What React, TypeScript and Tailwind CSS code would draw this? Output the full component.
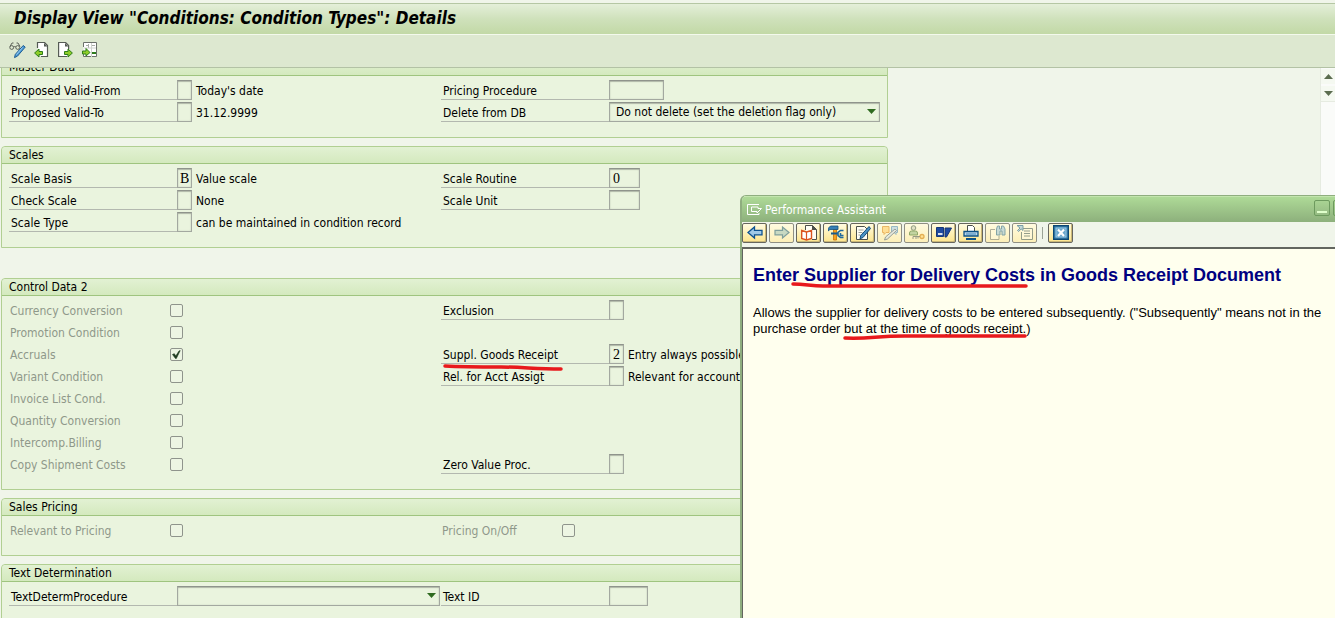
import type { ReactNode } from "react";

const inputBox =
  "h-5 shrink-0 border border-[#a3a8a0] border-t-[#8f948c] bg-[#eaf4de] pt-px font-['Liberation_Serif',serif] text-sm leading-4 text-black shadow-[inset_0_1px_1px_rgba(0,0,0,0.22),inset_0_0_2px_rgba(0,0,0,0.12)] outline-none";

function Panel({ title, children }: { title: string; children: ReactNode }) {
  return (
    <section className="rounded-t border border-[#b1cf92] bg-[#eaf4de]">
      <h2 className="h-[17px] rounded-t border-b border-[#9fc47f] bg-linear-to-b from-[#e2f1d3] to-[#d4e9be] pl-[7px] text-xs leading-4">
        {title}
      </h2>
      <div className="pt-[3px] pb-3.5 pl-[7px]">{children}</div>
    </section>
  );
}

function Row({ left, right }: { left?: ReactNode; right?: ReactNode }) {
  return (
    <div className="grid h-[22px] grid-cols-[432px_1fr]">
      <div className="flex items-center">{left}</div>
      <div className="flex items-center">{right}</div>
    </div>
  );
}

function FieldLabel({ id, children, marked }: { id: string; children: ReactNode; marked?: boolean }) {
  return (
    <label htmlFor={id} className="relative h-5 w-[168px] shrink-0 border-b border-[#b3b8af] pl-0.5 leading-[22px]">
      {children}
      {marked && (
        <svg className="absolute top-[18px] left-0 z-10" width="124" height="10" fill="none">
          <path d="M4 4C22 5 38 5 60 5s34 2 60 2" stroke="#e8191c" strokeWidth="3.5" strokeLinecap="round" />
        </svg>
      )}
    </label>
  );
}

type FieldProps = { id: string; label: string; value?: string; note?: string; size?: string; marked?: boolean };

function Field({ id, label, value = "", note, size = "w-[15px] px-[3px]", marked }: FieldProps) {
  return (
    <>
      <FieldLabel id={id} marked={marked}>{label}</FieldLabel>
      <input id={id} defaultValue={value} readOnly className={`${inputBox} ${size}`} />
      {note && <span className="pt-0.5 pl-1 whitespace-nowrap">{note}</span>}
    </>
  );
}

function SelectField({ id, label, value, size }: { id: string; label: string; value: string; size: string }) {
  return (
    <>
      <FieldLabel id={id}>{label}</FieldLabel>
      <div className={`relative ${size}`}>
        <select
          id={id}
          className="block h-5 w-full appearance-none border border-[#a3a8a0] border-t-[#8f948c] bg-[#eaf4de] pl-1.5 text-xs leading-4 text-black shadow-[inset_0_1px_1px_rgba(0,0,0,0.22),inset_0_0_2px_rgba(0,0,0,0.12)] outline-none"
        >
          <option>{value}</option>
        </select>
        <svg className="pointer-events-none absolute top-[7px] right-1" width="9" height="5" viewBox="0 0 9 5">
          <path d="M0 0h9L4.500 5z" fill="#2f6b20" />
        </svg>
      </div>
    </>
  );
}

function Check({ id, label, checked, narrow }: { id: string; label: string; checked?: boolean; narrow?: boolean }) {
  return (
    <>
      <label htmlFor={id} className={`pt-0.5 pl-px text-[#8f988a] ${narrow ? "w-[121px]" : "w-[161px]"}`}>
        {label}
      </label>
      <span className="relative h-[13px] w-[13px]">
        <input
          id={id}
          type="checkbox"
          defaultChecked={checked}
          disabled
          className="block h-[13px] w-[13px] appearance-none rounded-[2px] border border-[#8f948c] bg-[#edf5e3]"
        />
        {checked && (
          <svg className="pointer-events-none absolute top-0 left-0" width="13" height="13" viewBox="0 0 13 13">
            <path d="M2.5 6.5l1.8-.8L5.8 8 9 3l1.2-.4L6.3 10.500H5.500z" fill="#1c3a1e" stroke="#1c3a1e" strokeWidth=".6" />
          </svg>
        )}
      </span>
    </>
  );
}

function DisplayChangeIcon() {
  return (
    <svg width="17" height="17" viewBox="0 0 17 17" fill="none">
      <g stroke="#5d6259" strokeWidth="1">
        <circle cx="2.700" cy="5.500" r="1.900" />
        <circle cx="8.700" cy="5.500" r="1.900" />
        <path d="M4.500 5q1.200-1 2.400 0M1 4.500L3 1h1.500M7.500 1H9l2 3.500" />
      </g>
      <path d="M14.200 3.500l2 1.600-7.700 9-3 1.500.8-3.200z" fill="#4b9bd6" stroke="#1d5c93" strokeWidth="1" />
      <path d="M13.500 5.500l-6 7" stroke="#9ccbef" />
    </svg>
  );
}

function PrevEntryIcon() {
  return (
    <svg width="15" height="16" viewBox="0 0 15 16">
      <path d="M3.500 6V.500h7l3 3V14.500H7" fill="#fff" stroke="#555b55" strokeWidth="1.200" />
      <path d="M10 1v3.500h3.500L10 1z" fill="#555b55" />
      <path d="M.6 11L5 7v2.500h3.500v3H5V15z" fill="#8fce28" stroke="#2d7d1c" />
    </svg>
  );
}

function NextEntryIcon() {
  return (
    <svg width="15" height="16" viewBox="0 0 15 16">
      <path d="M9 14.500H.600V.500h7l3 3V7" fill="#fff" stroke="#555b55" strokeWidth="1.200" />
      <path d="M7 1v3.500h3.500L7 1z" fill="#555b55" />
      <path d="M14.400 11L10 7v2.500H6.500v3H10V15z" fill="#8fce28" stroke="#2d7d1c" />
    </svg>
  );
}

function PositionIcon() {
  return (
    <svg width="16" height="16" viewBox="0 0 16 16">
      <path d="M1.500 5V.500h13v14h-13V12" fill="#fff" stroke="#6c716b" />
      <path d="M4 3h3v1H4zM6 2h1v4H6zM10 3h3v1h-3z" fill="#a7aba5" />
      <path d="M2 6h12M9.500 1v14" stroke="#d0d3ce" />
      <path d="M.500 9H4V6.500L8 10.500 4 14v-2H.500z" fill="#8fce28" stroke="#2d7d1c" />
      <path d="M10 10h4v2h-4z" fill="#2d7d1c" />
    </svg>
  );
}

const BackIcon = (
  <path d="M1 7.500L7.500 2v3.300H15v4.500H7.500V13z" fill="#9fc9e8" stroke="#0d5291" strokeWidth="1.300" />
);
const ForwardIcon = (
  <path d="M15 7.500L8.500 2v3.300H1v4.500h7.500V13z" fill="#c8d9c2" stroke="#7f9f9c" strokeWidth="1.200" />
);
const BookIcon = (
  <>
    <path d="M4.500 5V.500h7l4 4v10H11" fill="#fffef4" stroke="#4b4f4b" />
    <path d="M11 0v5h5z" fill="#4b4f4b" />
    <path d="M.700 5.500L5.500 7l5-1.500v8L5.500 15 .700 13.500z" fill="#fff" stroke="#db5420" strokeWidth="1.400" />
    <path d="M5.500 7v8" stroke="#db5420" strokeWidth="1.200" />
  </>
);
const ToolsIcon = (
  <>
    <path d="M5.500 4h3v11h-3z" fill="#f8a21a" stroke="#c86d0a" strokeWidth=".8" />
    <path d="M0 3.500L2.500 1H10v3.500H2L0 6z" fill="#367fb5" stroke="#11507f" strokeWidth=".8" />
    <path d="M3 8.500h7" stroke="#1a5a8d" strokeWidth="2" />
    <path d="M15.500 5.500h-3L10 7.500v3l2.500 2h3M12.500 8v2.500h3" fill="none" stroke="#1f689d" strokeWidth="1.600" />
  </>
);
const NoteIcon = (
  <>
    <path d="M1.500 1.500h8l3 3v10h-11z" fill="#fffef4" stroke="#4b4f4b" />
    <path d="M3.500 5h5M3.500 7.500h4M3.500 10h2" stroke="#9a9d99" />
    <path d="M14 1.500l1.500 2-7.500 9-3 1.300.7-3.200z" fill="#4b92c4" stroke="#154d7b" />
  </>
);
const TranslateIcon = (
  <g opacity=".7">
    <path d="M.500 1.500H7v6H4l-2 2v-2H.500z" fill="#ffd47a" stroke="#e29a35" />
    <path d="M9.500 1.500h6v6H14v2l-2-2H9.500z" fill="#b9d5e5" stroke="#6c9dba" />
    <path d="M13 4l1.500 1.500-9 8.500-3 1 1-3z" fill="#dbe5e5" stroke="#6d7a80" />
  </g>
);
const UserKeyIcon = (
  <g opacity=".7">
    <circle cx="4.500" cy="3" r="2.300" fill="#d5d8bd" stroke="#61735c" />
    <path d="M.500 10V8q0-2 2-2h4q2 0 2 2v2z" fill="#a8c58e" stroke="#61883f" />
    <circle cx="13" cy="11.500" r="2" fill="#ffdc82" stroke="#d99121" strokeWidth="1.300" />
    <path d="M11 11.500H4V14m3-2v2m2-2v1.500" fill="none" stroke="#6c7467" />
  </g>
);
const SplitIcon = (
  <>
    <path d="M.500 2.500h7v9h-7zM9 3h6.500L10.500 12H9z" fill="#1f4aa0" stroke="#163777" />
    <path d="M2 8h4.500v2H2z" fill="#d9e0ec" />
  </>
);
const PrintIcon = (
  <>
    <path d="M4.500 6V.500h5l2 2V6" fill="#fff" stroke="#4b4f4b" />
    <path d="M1 6.500h14v4.500H1z" fill="#b6d5ea" stroke="#0c5186" strokeWidth="1.300" />
    <path d="M3 9h10" stroke="#4287ba" />
    <path d="M3 14h10" stroke="#0c5186" strokeWidth="2" />
  </>
);
const FindIcon = (
  <g opacity=".65">
    <path d="M5 4.500H.500v10H9V11" fill="#fff9dc" stroke="#85877b" />
    <path d="M6.500 10V4l1-3h2v3h2V1h2l1.500 3v6h-3V6h-2v4z" fill="#a9c9d6" stroke="#427891" />
  </g>
);
const ListIcon = (
  <g opacity=".7">
    <path d="M4.500 3.500h11v11h-11V7" fill="#fff9dc" stroke="#66786f" />
    <path d="M7 6h6M7 8.500h6M7 11h6" stroke="#66786f" />
    <path d="M0 .500h6v5L4.200 4 1.500 6.500.500 5.500 3 3z" fill="#a9c9d6" stroke="#427891" />
  </g>
);
const CloseIcon = (
  <>
    <path d="M.700.700h14.600v13.600H.700z" fill="#4c92bf" stroke="#0c4773" strokeWidth="1.400" />
    <path d="M3 3h10v9H3z" fill="#6aa7cd" stroke="#a9cfe6" strokeWidth=".7" />
    <path d="M5 4.500l6 6.500M11 4.500L5 11" stroke="#fff" strokeWidth="2.200" />
  </>
);

const helpActions: { name: string; icon: ReactNode; off?: boolean }[] = [
  { name: "Back", icon: BackIcon },
  { name: "Forward", icon: ForwardIcon, off: true },
  { name: "Application Help", icon: BookIcon },
  { name: "Technical Information", icon: ToolsIcon },
  { name: "Edit Note", icon: NoteIcon },
  { name: "Translate", icon: TranslateIcon, off: true },
  { name: "Authorization", icon: UserKeyIcon, off: true },
  { name: "Display Position", icon: SplitIcon },
  { name: "Print", icon: PrintIcon },
  { name: "Find", icon: FindIcon, off: true },
  { name: "Customizing", icon: ListIcon, off: true },
];

function HelpButton({ name, icon, off }: { name: string; icon: ReactNode; off?: boolean }) {
  return (
    <button
      type="button"
      aria-label={name}
      disabled={off}
      className={`flex h-5 w-[25px] items-center justify-center rounded-[2px] border bg-linear-to-b ${
        off
          ? "border-[#8f8f84] from-[#fffbe0] to-[#fcefb8]"
          : "border-[#66665e] from-[#fffbe0] to-[#fde58c] shadow-[inset_-1px_-1px_0_#c9b878]"
      }`}
    >
      <svg width="16" height="16" viewBox="0 0 16 16" fill="none">
        {icon}
      </svg>
    </button>
  );
}

function PerformanceAssistant() {
  return (
    <aside className="absolute top-[195px] right-0 bottom-0 z-20 flex w-[595px] flex-col overflow-hidden rounded-tl-md border-t border-l-2 border-[#8fae7f] bg-[#f0f5ea]">
      <header className="flex h-[26px] shrink-0 items-center border-t border-[#c3e5ae] bg-linear-to-b from-[#aeda97] to-[#8db07c] pl-[5px] text-white">
        <svg width="16" height="13" viewBox="0 0 16 13" fill="none" stroke="#fff">
          <path d="M12 1.500H.500v10H12V10M4.500 4v4.500h5.500v1.500l4.500-4.500H11V4z" />
        </svg>
        <h2 className="flex-1 pl-[2px] text-xs">Performance Assistant</h2>
        <div className="-mr-[14px] flex gap-[3px] pb-1">
          <button
            type="button"
            aria-label="Minimize"
            className="flex h-4 w-4 items-end justify-center rounded-[2px] border border-[#6d9a5e] pb-[2px]"
          >
            <span className="h-0.5 w-2.5 bg-[#e0ffcc]" />
          </button>
          <button type="button" aria-label="Maximize" className="h-4 w-4 rounded-[2px] border border-[#6d9a5e]" />
        </div>
      </header>
      <div className="flex h-[25px] shrink-0 items-start gap-0.5 pt-px">
        {helpActions.map((a) => (
          <HelpButton key={a.name} {...a} />
        ))}
        <span className="mx-[3px] mt-1 h-3 w-px bg-[#9ba396]" />
        <HelpButton name="Close" icon={CloseIcon} />
      </div>
      <article className="relative flex-1 border-t-2 border-l border-[#62655f] bg-[#ffffee] px-[10px] pt-3.5 font-['Liberation_Sans',sans-serif] text-black">
        <h3 className="text-lg leading-6 font-bold whitespace-nowrap text-[#000080]">
          Enter Supplier for Delivery Costs in Goods Receipt Document
        </h3>
        <p className="pt-[18px] text-[13px] leading-4 whitespace-nowrap">
          Allows the supplier for delivery costs to be entered subsequently. ("Subsequently" means not in the
          <br />
          purchase order but at the time of goods receipt.)
        </p>
        <svg className="pointer-events-none absolute top-8 left-12" width="242" height="10" fill="none">
          <path d="M2 3c12 0 18 2 30 2h203" stroke="#e8191c" strokeWidth="3.500" strokeLinecap="round" />
        </svg>
        <svg className="pointer-events-none absolute top-[82px] left-[98px]" width="192" height="12" fill="none">
          <path d="M4 7c26 1 30-2 60-2h120" stroke="#e8191c" strokeWidth="3.500" strokeLinecap="round" />
        </svg>
      </article>
    </aside>
  );
}

const toolbar = [
  { name: "Display or Change", icon: <DisplayChangeIcon /> },
  { name: "Previous Entry", icon: <PrevEntryIcon /> },
  { name: "Next Entry", icon: <NextEntryIcon /> },
  { name: "Other Entry", icon: <PositionIcon /> },
];

export default function App() {
  return (
    <div className="relative flex h-screen flex-col overflow-hidden bg-[#f0f5ea] font-['DejaVu_Sans_Condensed','DejaVu_Sans',sans-serif] text-xs text-black">
      <header className="mt-[3px] h-8 shrink-0 border-y border-t-[#b5c7a4] border-b-[#f3f9ec] bg-linear-to-b from-[#e4efd9] via-[#cfe1bb] to-[#c2d9a6]">
        <h1 className="pl-3.5 text-[17px] leading-7 font-bold italic">
          Display View "Conditions: Condition Types": Details
        </h1>
      </header>
      <nav className="flex h-[33px] shrink-0 items-center gap-[7px] border-b border-[#b3c2a5] bg-[#dde8d0] pr-2 pb-0.5 pl-[9px]">
        {toolbar.map((t) => (
          <button key={t.name} type="button" aria-label={t.name} className="flex w-[17px] justify-center">
            {t.icon}
          </button>
        ))}
      </nav>
      <div className="flex min-h-0 flex-1">
        <main className="flex-1 overflow-hidden pl-px">
          <div className="-mt-2.5 flex max-w-[887px] flex-col gap-2">
            <Panel title="Master Data">
              <Row
                left={<Field id="valid-from" label="Proposed Valid-From" note="Today's date" />}
                right={<Field id="pricing-procedure" label="Pricing Procedure" size="w-[55px] px-[3px]" />}
              />
              <Row
                left={<Field id="valid-to" label="Proposed Valid-To" note="31.12.9999" />}
                right={
                  <SelectField
                    id="delete-db"
                    label="Delete from DB"
                    value="Do not delete (set the deletion flag only)"
                    size="w-[271px]"
                  />
                }
              />
            </Panel>
            <Panel title="Scales">
              <Row
                left={<Field id="scale-basis" label="Scale Basis" value="B" note="Value scale" size="w-[15px] px-[2px]" />}
                right={<Field id="scale-routine" label="Scale Routine" value="0" size="w-[31px] px-[3px]" />}
              />
              <Row
                left={<Field id="check-scale" label="Check Scale" note="None" />}
                right={<Field id="scale-unit" label="Scale Unit" size="w-[31px] px-[3px]" />}
              />
              <Row left={<Field id="scale-type" label="Scale Type" note="can be maintained in condition record" />} />
            </Panel>
            <div className="mt-[22px]">
              <Panel title="Control Data 2">
                <Row
                  left={<Check id="currency" label="Currency Conversion" />}
                  right={<Field id="exclusion" label="Exclusion" />}
                />
                <Row left={<Check id="promotion" label="Promotion Condition" />} />
                <Row
                  left={<Check id="accruals" label="Accruals" checked />}
                  right={
                    <Field id="goods-receipt" label="Suppl. Goods Receipt" value="2" note="Entry always possible" marked />
                  }
                />
                <Row
                  left={<Check id="variant" label="Variant Condition" />}
                  right={<Field id="acct-assigt" label="Rel. for Acct Assigt" note="Relevant for account assignment" />}
                />
                <Row left={<Check id="invoice" label="Invoice List Cond." />} />
                <Row left={<Check id="quantity" label="Quantity Conversion" />} />
                <Row left={<Check id="intercomp" label="Intercomp.Billing" />} />
                <Row
                  left={<Check id="shipment" label="Copy Shipment Costs" />}
                  right={<Field id="zero-value" label="Zero Value Proc." />}
                />
              </Panel>
            </div>
            <Panel title="Sales Pricing">
              <Row
                left={<Check id="relevant" label="Relevant to Pricing" />}
                right={<Check id="pricing-onoff" label="Pricing On/Off" narrow />}
              />
            </Panel>
            <Panel title="Text Determination">
              <Row
                left={<SelectField id="text-procedure" label="TextDetermProcedure" value="" size="w-[263px]" />}
                right={<Field id="text-id" label="Text ID" size="w-[39px] px-[3px]" />}
              />
            </Panel>
          </div>
        </main>
        <div className="flex w-[15px] shrink-0 flex-col gap-0.5 border-l border-[#e6ebe1] bg-[#fafbf9] pt-px">
          <button type="button" aria-label="Scroll up" className="flex h-[15px] items-center justify-center bg-[#f5f9f1]">
            <svg width="9" height="5" viewBox="0 0 9 5">
              <path d="M4.500 0L9 5H0z" fill="#5c6d50" />
            </svg>
          </button>
          <button
            type="button"
            aria-label="Scroll down"
            className="flex h-4 items-center justify-center border-b border-[#e6ebe1] bg-[#f5f9f1]"
          >
            <svg width="9" height="5" viewBox="0 0 9 5">
              <path d="M0 0h9L4.500 5z" fill="#5c6d50" />
            </svg>
          </button>
        </div>
      </div>
      <PerformanceAssistant />
    </div>
  );
}
